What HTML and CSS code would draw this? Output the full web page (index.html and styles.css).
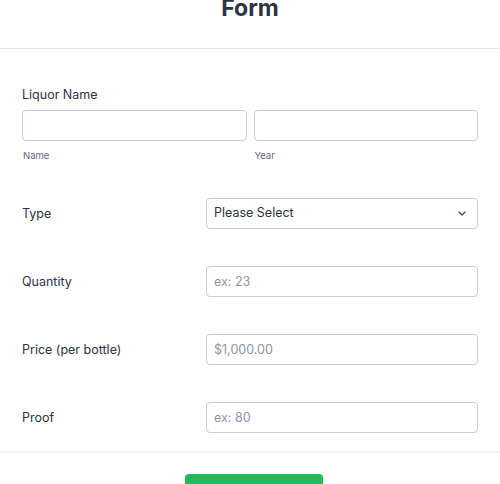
FILE: index.html
```html
<!DOCTYPE html>
<html lang="en">
<head>
<meta charset="utf-8">
<title>Form</title>
<link rel="stylesheet" href="styles.css">
</head>
<body>
<header class="header">
  <h1 class="title">Form</h1>
</header>
<main class="form-body">
  <div class="field-stack">
    <label class="label">Liquor Name</label>
    <div class="pair">
      <div class="sub">
        <input class="input" type="text">
        <span class="sublabel">Name</span>
      </div>
      <div class="sub">
        <input class="input" type="text">
        <span class="sublabel">Year</span>
      </div>
    </div>
  </div>
  <div class="row">
    <label class="label">Type</label>
    <div class="select">
      <span>Please Select</span>
      <svg class="chev" width="8" height="5" viewBox="0 0 8 5"><path d="M1 1 L4 4 L7 1" fill="none" stroke="#3e4659" stroke-width="1.3" stroke-linecap="round" stroke-linejoin="round"/></svg>
    </div>
  </div>
  <div class="row">
    <label class="label">Quantity</label>
    <input class="input" type="text" placeholder="ex: 23">
  </div>
  <div class="row">
    <label class="label">Price (per bottle)</label>
    <input class="input" type="text" placeholder="$1,000.00">
  </div>
  <div class="row">
    <label class="label">Proof</label>
    <input class="input" type="text" placeholder="ex: 80">
  </div>
</main>
<footer class="footer">
  <button class="submit" type="button">Submit</button>
</footer>
</body>
</html>
```
FILE: styles.css
```css
html, body {
  margin: 0;
  padding: 0;
  background: #ffffff;
  overflow: hidden;
}
body {
  font-family: "Inter", "Noto Sans", sans-serif;
  color: #2c3345;
}
.header {
  height: 49px;
  box-sizing: border-box;
  border-bottom: 1px solid #e4e6ec;
  overflow: hidden;
}
.title {
  margin: -3px 0 0;
  font-size: 23px;
  line-height: 23px;
  font-weight: 700;
  text-align: center;
  color: #2c3345;
}
.form-body {
  padding: 38px 22px 18px;
}
.label {
  font-size: 12.5px;
  font-weight: 400;
  color: #2c3345;
  line-height: 16px;
}
.field-stack .label {
  display: block;
  margin-bottom: 7px;
}
.pair {
  display: grid;
  grid-template-columns: 1fr 1fr;
  gap: 7px;
}
.sub {
  display: flex;
  flex-direction: column;
}
.sublabel {
  font-size: 9.5px;
  font-weight: 400;
  color: #5f6880;
  margin: 9px 0 0 1px;
  line-height: 11px;
}
.input {
  box-sizing: border-box;
  height: 31px;
  width: 100%;
  border: 1px solid #c9ccd8;
  border-radius: 4px;
  padding: 0 7px;
  font-family: inherit;
  font-size: 12.5px;
  color: #2c3345;
  background: #fff;
  outline: none;
}
.input::placeholder {
  color: #8d94a6;
}
.row {
  display: grid;
  grid-template-columns: 184px 1fr;
  align-items: center;
  margin-top: 37px;
}
.select {
  box-sizing: border-box;
  height: 31px;
  border: 1px solid #c9ccd8;
  border-radius: 4px;
  padding: 0 11px 0 7px;
  display: flex;
  align-items: center;
  justify-content: space-between;
  font-size: 12.5px;
  color: #2c3345;
}
.select span {
  margin-top: -2px;
}
.footer {
  border-top: 2px solid #f1f2f6;
  display: flex;
  justify-content: center;
  padding: 21px 0 0 8px;
}
.submit {
  width: 138px;
  height: 40px;
  border: none;
  border-radius: 4px;
  background: #1fbd59;
  color: #fff;
  font-family: inherit;
  font-size: 14px;
  font-weight: 600;
}
```
